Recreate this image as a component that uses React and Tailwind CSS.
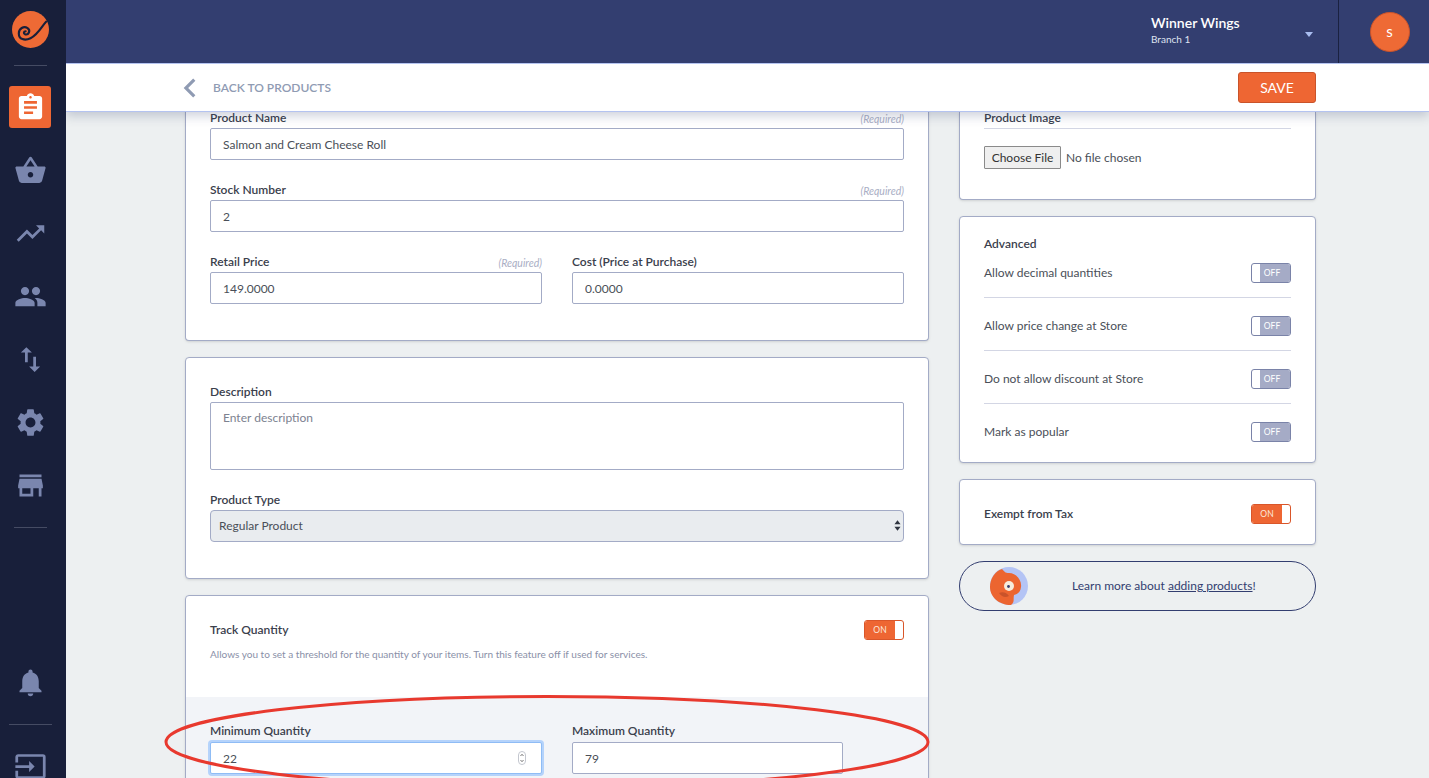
import {
  MdAssignment,
  MdShoppingBasket,
  MdTrendingUp,
  MdPeople,
  MdSwapVert,
  MdSettings,
  MdStore,
  MdNotifications,
  MdInput,
  MdChevronLeft,
} from 'react-icons/md'

const navIcons = [MdShoppingBasket, MdTrendingUp, MdPeople, MdSwapVert, MdSettings, MdStore]

function Logo() {
  return (
    <svg viewBox="0 0 38 38" className="w-[37px] h-[37px]">
      <circle cx="19" cy="19" r="19" fill="#ee6a35" />
      <path
        d="M35 11 C31 15 27 24 19 28 C13 31 7 29 7 23 C7 18 12 15 16 17.5 C19.5 20 17 25 13.5 24 C11.5 23.2 12 20.8 14 20.8"
        fill="none"
        stroke="#181f3a"
        strokeWidth="2.2"
        strokeLinecap="round"
      />
    </svg>
  )
}

function Mascot() {
  return (
    <svg viewBox="0 0 38 38" className="w-[38px] h-[38px] shrink-0">
      <circle cx="19" cy="19" r="19" fill="#b4c4f5" />
      <path
        d="M0 20 C0 12 5 4 12 2 C15 5 15 6 19 6 C26 6 32 13 31 20 C30.5 25 28 27 24 28 C23 32 25 35 21 38 C9 38 0 30 0 20 Z"
        fill="#ec6530"
      />
      <path d="M9 26 C13 24 17 26 19 29 C15 31 12 30 9 26 Z" fill="#c9532a" />
      <circle cx="19" cy="19" r="5" fill="#f6eddc" />
      <circle cx="18.5" cy="19.5" r="1.4" fill="#333e70" />
    </svg>
  )
}

function Toggle({ on }) {
  if (on) {
    return (
      <div className="flex w-10 h-5 shrink-0 rounded-[3px] border border-[#d9562a] bg-white overflow-hidden">
        <span className="flex-1 bg-[#ee6633] text-[#fbe6dc] text-[8.5px] leading-[18px] text-center">ON</span>
        <span className="w-[8px]" />
      </div>
    )
  }
  return (
    <div className="flex w-10 h-5 shrink-0 rounded-[3px] border border-[#7a83a8] bg-white overflow-hidden">
      <span className="w-[8px]" />
      <span className="flex-1 bg-[#a5abc6] text-white text-[8.5px] leading-[18px] text-center pr-[6px]">OFF</span>
    </div>
  )
}

function Label({ children, required }) {
  return (
    <div className="flex items-end justify-between h-[16px] mb-[2px]">
      <span className="text-[12px] leading-[16px] font-semibold text-[#3a404c]">{children}</span>
      {required && <span className="text-[10.5px] leading-[14px] italic text-[#a9aec4]">(Required)</span>}
    </div>
  )
}

function TextInput({ value }) {
  return (
    <input
      readOnly
      value={value}
      className="block w-full h-8 px-3 bg-white border border-[#a3abc6] rounded-[2px] text-[12px] text-[#4a4f58] outline-none"
    />
  )
}

function Card({ className = '', children }) {
  return (
    <section className={`bg-white border border-[#a3abc6] rounded-[4px] shadow-sm ${className}`}>
      {children}
    </section>
  )
}

function AdvancedRow({ label, last }) {
  return (
    <div className={`flex items-center justify-between h-[53px] pt-[3px] ${last ? '' : 'border-b border-[#d3d6e4]'}`}>
      <span className="text-[12px] text-[#4a4f58]">{label}</span>
      <Toggle />
    </div>
  )
}

export default function App() {
  return (
    <div
      className="relative flex h-screen overflow-hidden bg-[#edf0f1]"
      style={{ fontFamily: 'Lato, "Open Sans", sans-serif' }}
    >
      <aside className="flex flex-col items-center w-[66px] shrink-0 pr-[6px] bg-[#181f3a] z-20">
        <div className="flex items-center justify-center h-[65px] w-full pb-[9px] pt-[2px]">
          <Logo />
        </div>
        <div className="w-[33px] h-px bg-[#454b63]" />
        <nav className="flex flex-col items-center mt-[9.5px]">
          <div className="flex items-center justify-center h-[63px]">
            <div className="flex items-center justify-center w-[42px] h-[42px] rounded-[3px] bg-[#ee6633]">
              <MdAssignment className="text-white text-[31px]" />
            </div>
          </div>
          {navIcons.map((Icon, i) => (
            <div key={i} className="flex items-center justify-center h-[63px]">
              <Icon className="text-[#7a86ae] text-[33px]" />
            </div>
          ))}
        </nav>
        <div className="w-[33px] h-px bg-[#454b63] mt-[10.5px]" />
        <div className="mt-auto -mb-[20px] flex flex-col items-center">
          <div className="flex items-center justify-center h-[63px]">
            <MdNotifications className="text-[#7a86ae] text-[33px]" />
          </div>
          <div className="w-[43px] h-px bg-[#454b63] mt-[10px]" />
          <div className="flex items-center justify-center h-[63px] mt-[10px]">
            <MdInput className="text-[#7a86ae] text-[33px]" />
          </div>
        </div>
      </aside>

      <div className="flex flex-col flex-1 min-w-0">
        <header className="flex items-center justify-end h-[64px] shrink-0 bg-[#333e70] border-b border-[#b4c3f0] z-20">
          <div className="flex items-center w-[187px] h-full pr-[25px]">
            <div className="flex-1 text-white mt-[-3px]">
              <div className="text-[14px] leading-[17px] font-semibold">Winner Wings</div>
              <div className="text-[10px] leading-[13px] text-[#dfe3f0] mt-[2px]">Branch 1</div>
            </div>
            <span className="w-0 h-0 mt-[6px] border-x-[4px] border-x-transparent border-t-[5px] border-t-[#a9bdf0]" />
          </div>
          <div className="flex items-center justify-center w-[91px] h-full border-l border-[#1a2140] pl-[11px]">
            <div className="flex items-center justify-center w-10 h-10 rounded-full bg-[#ee6a35] border border-[#c9532a] text-white text-[15px]">
              s
            </div>
          </div>
        </header>

        <div className="flex items-center justify-between h-[48px] shrink-0 pl-[107px] pr-[113px] bg-white border-b border-[#b4c3f0] shadow-[0_4px_10px_rgba(60,70,110,0.25)] z-10">
          <div className="flex items-center">
            <MdChevronLeft className="text-[#8f9bb3] text-[38px] -ml-[2px]" />
            <span className="ml-[4px] text-[12px] font-semibold text-[#8f9bb3]">BACK TO PRODUCTS</span>
          </div>
          <button className="w-[78px] h-[31px] rounded-[3px] bg-[#ee6633] border border-[#c9532a] text-white text-[14px]">
            SAVE
          </button>
        </div>

        <main className="flex items-start gap-[30px] pl-[119px] min-h-0 flex-1">
          <div className="flex flex-col gap-4 w-[744px] shrink-0">
            <Card className="-mt-[2px] border-t-0 rounded-t-none px-6 pb-9">
              <Label required>Product Name</Label>
              <TextInput value="Salmon and Cream Cheese Roll" />
              <div className="mt-[22px]">
                <Label required>Stock Number</Label>
                <TextInput value="2" />
              </div>
              <div className="flex gap-[30px] mt-[22px]">
                <div className="flex-1">
                  <Label required>Retail Price</Label>
                  <TextInput value="149.0000" />
                </div>
                <div className="flex-1">
                  <Label>Cost (Price at Purchase)</Label>
                  <TextInput value="0.0000" />
                </div>
              </div>
            </Card>

            <Card className="px-6 pt-[26px] pb-9">
              <Label>Description</Label>
              <textarea
                readOnly
                placeholder="Enter description"
                className="block w-full h-[68px] px-3 py-[6px] bg-white border border-[#a3abc6] rounded-[2px] text-[12px] text-[#4a4f58] placeholder:text-[#7d8290] outline-none resize-none"
              />
              <div className="mt-[22px]">
                <Label>Product Type</Label>
                <div className="relative">
                  <select className="block w-full h-8 px-2 bg-[#e9ecef] border border-[#a3abc6] rounded-[4px] text-[12px] text-[#4a4f58] appearance-none outline-none">
                    <option>Regular Product</option>
                  </select>
                  <svg viewBox="0 0 8 12" className="absolute right-[3px] top-[10px] w-[7px] h-[11px] fill-[#2f3440]">
                    <path d="M4 0 L7.5 4.5 H0.5 Z M4 12 L0.5 7.5 H7.5 Z" />
                  </svg>
                </div>
              </div>
            </Card>

            <Card className="overflow-hidden">
              <div className="px-6 pt-[24px] h-[101px]">
                <div className="flex items-start justify-between">
                  <span className="text-[12px] leading-[20px] font-semibold text-[#3a404c]">Track Quantity</span>
                  <Toggle on />
                </div>
                <p className="text-[10.05px] leading-[14px] text-[#8a90a8] mt-[7px]">
                  Allows you to set a threshold for the quantity of your items. Turn this feature off if used for services.
                </p>
              </div>
              <div className="flex gap-[30px] px-6 pt-[26px] pb-6 bg-[#f2f4f8]">
                <div className="w-[332px]">
                  <Label>Minimum Quantity</Label>
                  <div className="relative mt-[3px]">
                    <input
                      readOnly
                      value="22"
                      className="block w-full h-8 px-3 bg-white border border-[#8fbcf5] rounded-[2px] shadow-[0_0_0_2px_#b5d3fb] text-[12px] text-[#4a4f58] outline-none"
                    />
                    <svg viewBox="0 0 8 14" className="absolute right-[16px] top-[9px] w-[8px] h-[14px]">
                      <rect x="0.5" y="0.5" width="7" height="13" rx="3.5" fill="#fff" stroke="#c4c7cf" />
                      <path d="M2.5 5 L4 3.3 L5.5 5 M2.5 9 L4 10.7 L5.5 9" fill="none" stroke="#555" strokeWidth="0.8" />
                    </svg>
                  </div>
                </div>
                <div className="w-[271px]">
                  <Label>Maximum Quantity</Label>
                  <div className="mt-[3px]">
                    <TextInput value="79" />
                  </div>
                </div>
              </div>
            </Card>
          </div>

          <div className="flex flex-col gap-4 w-[357px] shrink-0">
            <Card className="border-t-0 rounded-t-none h-[88px] px-6">
              <div className="h-[17px] border-b border-[#d3d6e4] text-[12px] leading-[12px] font-semibold text-[#3a404c]">
                Product Image
              </div>
              <input
                type="file"
                className="block mt-[17px] text-[12px] text-[#4a4f58] file:h-[23px] file:w-[77px] file:mr-[5px] file:bg-[#efefef] file:border file:border-[#8a8a8a] file:rounded-[1px] file:text-[12px] file:text-[#333]"
              />
            </Card>

            <Card className="px-6 pt-[19px] pb-[5px]">
              <div className="text-[12px] leading-[15px] font-semibold text-[#3a404c] mb-[2px]">Advanced</div>
              <div className="-mt-[8px]">
                <AdvancedRow label="Allow decimal quantities" />
                <AdvancedRow label="Allow price change at Store" />
                <AdvancedRow label="Do not allow discount at Store" />
                <AdvancedRow label="Mark as popular" last />
              </div>
            </Card>

            <Card className="flex items-center justify-between h-[66px] px-6 pt-[3px]">
              <span className="text-[12px] font-semibold text-[#3a404c]">Exempt from Tax</span>
              <Toggle on />
            </Card>

            <div className="flex items-center h-[50px] pl-[30px] rounded-[25px] border border-[#333e70]">
              <Mascot />
              <p className="ml-[44px] text-[12px] text-[#333e70]">
                Learn more about <span className="underline">adding products</span>!
              </p>
            </div>
          </div>
        </main>
      </div>

      {/* marking drawn over the screenshot */}
      <svg className="absolute inset-0 w-full h-full pointer-events-none z-30" viewBox="0 0 1429 778">
        <ellipse cx="547" cy="742" rx="381" ry="45.5" fill="none" stroke="#e8392e" strokeWidth="3" />
      </svg>
    </div>
  )
}
